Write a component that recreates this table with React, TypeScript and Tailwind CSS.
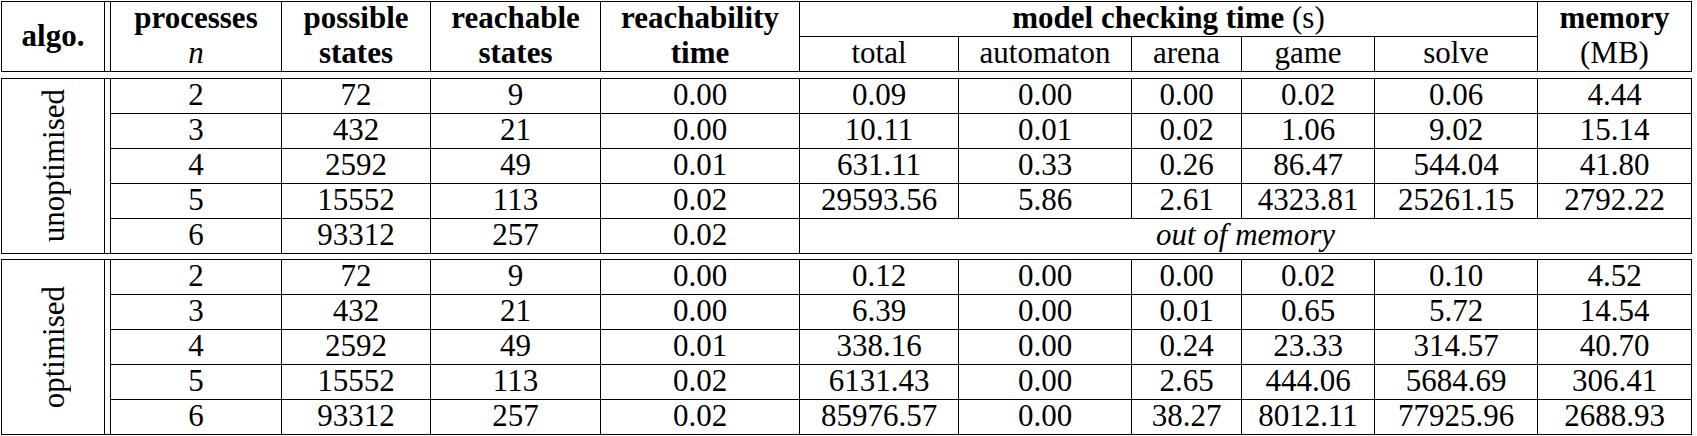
const cols =
  'grid-cols-[102px_5px_170px_148px_169px_198px_158px_172px_109px_132px_162px_153px]'

const unoptimised: string[][] = [
  ['2', '72', '9', '0.00', '0.09', '0.00', '0.00', '0.02', '0.06', '4.44'],
  ['3', '432', '21', '0.00', '10.11', '0.01', '0.02', '1.06', '9.02', '15.14'],
  ['4', '2592', '49', '0.01', '631.11', '0.33', '0.26', '86.47', '544.04', '41.80'],
  ['5', '15552', '113', '0.02', '29593.56', '5.86', '2.61', '4323.81', '25261.15', '2792.22'],
  ['6', '93312', '257', '0.02'],
]

const optimised: string[][] = [
  ['2', '72', '9', '0.00', '0.12', '0.00', '0.00', '0.02', '0.10', '4.52'],
  ['3', '432', '21', '0.00', '6.39', '0.00', '0.01', '0.65', '5.72', '14.54'],
  ['4', '2592', '49', '0.01', '338.16', '0.00', '0.24', '23.33', '314.57', '40.70'],
  ['5', '15552', '113', '0.02', '6131.43', '0.00', '2.65', '444.06', '5684.69', '306.41'],
  ['6', '93312', '257', '0.02', '85976.57', '0.00', '38.27', '8012.11', '77925.96', '2688.93'],
]

function HeadCell({ children, className = '' }: { children: React.ReactNode; className?: string }) {
  return (
    <div className={`flex items-center justify-center bg-white pb-[2px] ${className}`}>{children}</div>
  )
}

function TwoLine({ top, bottom }: { top: React.ReactNode; bottom: React.ReactNode }) {
  return (
    <div className="row-span-2 grid grid-rows-[34px_34px] gap-px bg-white">
      <div className="flex items-center justify-center pb-[2px]">{top}</div>
      <div className="flex items-center justify-center pb-[2px]">{bottom}</div>
    </div>
  )
}

function Header() {
  return (
    <div className={`grid w-max ${cols} grid-rows-[34px_34px] gap-px bg-black p-px font-bold`}>
      <HeadCell className="row-span-2">algo.</HeadCell>
      <div className="row-span-2 bg-white" />
      <TwoLine top="processes" bottom={<span className="font-normal italic">n</span>} />
      <TwoLine top="possible" bottom="states" />
      <TwoLine top="reachable" bottom="states" />
      <TwoLine top="reachability" bottom="time" />
      <HeadCell className="col-span-5">
        model checking time&nbsp;<span className="font-normal">(s)</span>
      </HeadCell>
      <TwoLine top="memory" bottom={<span className="font-normal">(MB)</span>} />
      <HeadCell className="font-normal">total</HeadCell>
      <HeadCell className="font-normal">automaton</HeadCell>
      <HeadCell className="font-normal">arena</HeadCell>
      <HeadCell className="font-normal">game</HeadCell>
      <HeadCell className="font-normal">solve</HeadCell>
    </div>
  )
}

function Block({ label, rows, className = '' }: { label: string; rows: string[][]; className?: string }) {
  return (
    <div className={`grid w-max ${cols} auto-rows-[34px] gap-px bg-black p-px ${className}`}>
      <div className="row-span-5 flex items-center justify-center bg-white">
        <span className="rotate-180 leading-none [writing-mode:vertical-rl]">{label}</span>
      </div>
      <div className="row-span-5 bg-white" />
      {rows.map((row, i) => (
        <>
          {row.map((value, j) => (
            <div key={`${i}-${j}`} className="flex items-center justify-center bg-white pb-[3px]">
              {value}
            </div>
          ))}
          {row.length === 4 && (
            <div key={`${i}-oom`} className="col-span-6 flex items-center justify-center bg-white pb-[3px] italic">
              out of memory
            </div>
          )}
        </>
      ))}
    </div>
  )
}

export default function App() {
  return (
    <div className="min-h-screen bg-white pl-px pt-px [font-family:'Liberation_Serif',serif] text-[31px] leading-[34px] text-black">
      <Header />
      <Block label="unoptimised" rows={unoptimised} className="mt-[6px]" />
      <Block label="optimised" rows={optimised} className="mt-[5px]" />
    </div>
  )
}
